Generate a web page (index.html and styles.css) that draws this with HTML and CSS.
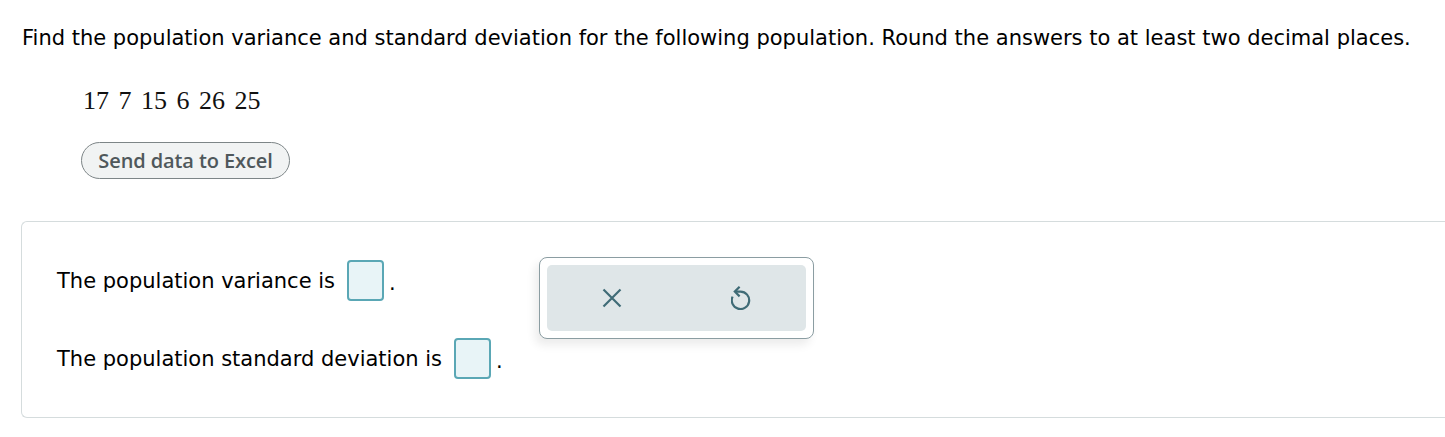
FILE: index.html
```html
<!DOCTYPE html>
<html>
<head>
<meta charset="utf-8">
<link rel="stylesheet" href="styles.css">
</head>
<body>
<div class="page">
  <p class="question">Find the population variance and standard deviation for the following population. Round the answers to at least two decimal places.</p>
  <div class="data">17 7 15 6 26 25</div>
  <button class="excel">Send data to Excel</button>
  <div class="answer">
    <div class="line line1">The population variance is <span class="box"></span><span class="dot">.</span></div>
    <div class="line line2">The population standard deviation is <span class="box"></span><span class="dot">.</span></div>
    <div class="popup">
      <div class="tools">
        <svg class="icon" width="20" height="20" viewBox="0 0 20 20"><path d="M1.5 1.5 L18.5 18.5 M18.5 1.5 L1.5 18.5" stroke="#3f6b76" stroke-width="2.2" fill="none"/></svg>
        <svg class="icon" width="20" height="24" viewBox="0 0 20 24"><path d="M4 5.6 L9.5 5.6 A8.7 8.7 0 1 1 1.6 10.6" stroke="#3f6b76" stroke-width="2.2" fill="none"/><path d="M8.6 0.8 L3.8 5.6 L8.6 10.4" stroke="#3f6b76" stroke-width="2.2" fill="none"/></svg>
      </div>
    </div>
  </div>
</div>
</body>
</html>
```
FILE: styles.css
```css
html, body { margin: 0; padding: 0; background: #fff; }
.page {
  padding: 21px 0 0 22px;
  font-family: "DejaVu Sans", Verdana, sans-serif;
  color: #000;
}
.question {
  margin: 0;
  font-size: 21px;
  line-height: 34px;
}
.data {
  margin: 31px 0 0 61px;
  font-family: "Liberation Serif", "Times New Roman", serif;
  font-size: 26px;
  line-height: 30px;
  word-spacing: 3px;
  color: #111;
}
.excel {
  display: block;
  margin: 26px 0 0 59px;
  width: 209px;
  height: 37px;
  border: 1px solid #7d8587;
  border-radius: 19px;
  background: #f1f3f3;
  color: #4f585b;
  font-family: "Open Sans", Lato, sans-serif;
  font-size: 20px;
  font-weight: 600;
  padding: 0;
  letter-spacing: -0.1px;
}
.answer {
  position: relative;
  margin: 42px 0 0 -1px;
  height: 197px;
  border: 1px solid #d5dcdd;
  border-right: none;
  border-radius: 6px 0 0 6px;
  padding: 38px 0 0 35px;
  box-sizing: border-box;
}
.line {
  display: flex;
  align-items: center;
  font-size: 21px;
  height: 41px;
}
.line2 { margin-top: 37px; }
.box {
  display: inline-block;
  box-sizing: border-box;
  width: 37px;
  height: 41px;
  margin-left: 12px;
  border: 2px solid #5aa7b5;
  border-radius: 4px;
  background: #e8f4f7;
}
.dot { margin-left: 5px; position: relative; top: 2px; }
.popup {
  position: absolute;
  left: 517px;
  top: 35px;
  width: 275px;
  height: 82px;
  box-sizing: border-box;
  border: 1px solid #8b9da2;
  border-radius: 8px;
  background: #fff;
  padding: 7px;
  box-shadow: -4px 6px 10px rgba(0,0,0,0.08);
}
.tools {
  height: 100%;
  background: #dfe6e8;
  border-radius: 5px;
  display: flex;
  align-items: center;
  padding-left: 55px;
  gap: 109px;
}
.icon { display: block; }
```
